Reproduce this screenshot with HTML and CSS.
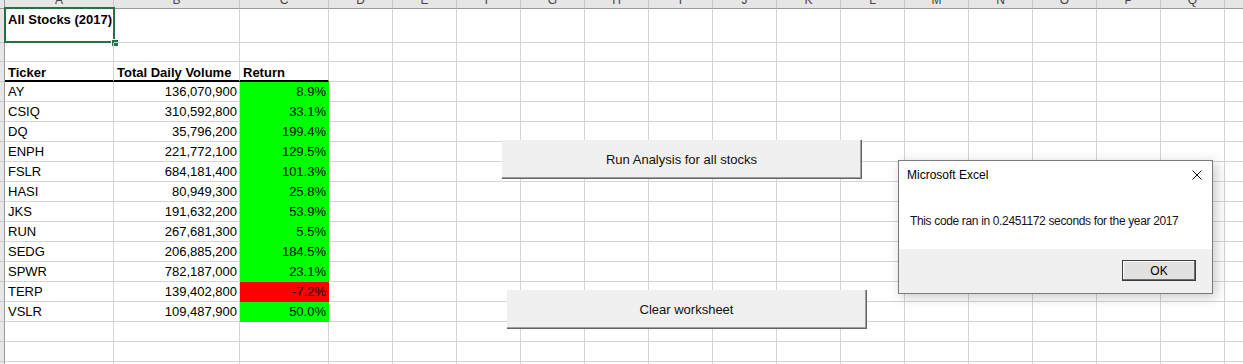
FILE: index.html
```html
<!DOCTYPE html>
<html lang="en">
<head>
  <meta charset="UTF-8">
  <meta name="viewport" content="width=device-width, initial-scale=1.0">
  <title>All Stocks (2017)</title>
  <link rel="stylesheet" href="styles.css">
</head>
<body>
  <div class="planilha" id="planilha"></div>

  <button class="botao-macro botao-rodar">Run Analysis for all stocks</button>
  <button class="botao-macro botao-limpar">Clear worksheet</button>

  <div class="msgbox">
    <div class="msgbox-titulo">
      <span>Microsoft Excel</span>
      <svg class="msgbox-fechar" width="10" height="10" viewBox="0 0 10 10">
        <path d="M0.5 0.5 L9.5 9.5 M9.5 0.5 L0.5 9.5" stroke="#111" stroke-width="1" fill="none"/>
      </svg>
    </div>
    <div class="msgbox-corpo">This code ran in 0.2451172 seconds for the year 2017</div>
    <div class="msgbox-rodape">
      <button class="botao-ok">OK</button>
    </div>
  </div>

  <script>
    const colunas = ['A','B','C','D','E','F','G','H','I','J','K','L','M','N','O','P','Q','R'];
    const totalLinhas = 18;

    const acoes = [
      ['AY', '136,070,900', '8.9%'],
      ['CSIQ', '310,592,800', '33.1%'],
      ['DQ', '35,796,200', '199.4%'],
      ['ENPH', '221,772,100', '129.5%'],
      ['FSLR', '684,181,400', '101.3%'],
      ['HASI', '80,949,300', '25.8%'],
      ['JKS', '191,632,200', '53.9%'],
      ['RUN', '267,681,300', '5.5%'],
      ['SEDG', '206,885,200', '184.5%'],
      ['SPWR', '782,187,000', '23.1%'],
      ['TERP', '139,402,800', '-7.2%'],
      ['VSLR', '109,487,900', '50.0%']
    ];

    const planilha = document.getElementById('planilha');

    function celula(classes, texto) {
      const div = document.createElement('div');
      div.className = classes;
      if (texto !== undefined) {
        const span = document.createElement('span');
        span.textContent = texto;
        div.appendChild(span);
      }
      planilha.appendChild(div);
      return div;
    }

    // cabeçalho das colunas
    celula('canto');
    colunas.forEach(letra => celula('cab-coluna', letra));

    for (let linha = 1; linha <= totalLinhas; linha++) {
      celula('cab-linha');

      colunas.forEach((letra, i) => {
        let classes = 'cel';
        let texto;

        if (linha === 1 && i === 0) {
          const titulo = celula('cel titulo', 'All Stocks (2017)');
          const sel = document.createElement('div');
          sel.className = 'selecao';
          titulo.appendChild(sel);
          return;
        }

        if (linha === 3 && i < 3) {
          classes += ' cabecalho';
          texto = ['Ticker', 'Total Daily Volume', 'Return'][i];
        }

        const dado = acoes[linha - 4];
        if (dado && i < 3) {
          texto = dado[i];
          if (i > 0) classes += ' num';
          if (i === 2) classes += dado[2].startsWith('-') ? ' negativo' : ' positivo';
        }

        celula(classes, texto);
      });
    }
  </script>
</body>
</html>
```

FILE: styles.css
```css
body {
  margin: 0;
  background: #fff;
  font-family: "Liberation Sans", Arial, sans-serif;
  overflow: hidden;
  height: 364px;
}

.planilha {
  display: grid;
  grid-template-columns: 5px 109px 126px 89px repeat(15, 64px);
  grid-template-rows: 9px 34px 19px repeat(16, 20px);
  font-size: 13px;
  color: #000;
}

.canto {
  background: #e6e6e6;
  border-right: 1px solid #9b9b9b;
  border-bottom: 1px solid #9b9b9b;
}

.cab-coluna {
  background: #e6e6e6;
  border-right: 1px solid #c8c8c8;
  border-bottom: 1px solid #9b9b9b;
  display: flex;
  justify-content: center;
  align-items: flex-end;
  overflow: hidden;
  color: #444;
  font-size: 12px;
  line-height: 15px;
}

.cab-linha {
  background: #e6e6e6;
  border-right: 1px solid #9b9b9b;
  border-bottom: 1px solid #c8c8c8;
}

.cel {
  border-right: 1px solid #d4d4d4;
  border-bottom: 1px solid #d4d4d4;
  display: flex;
  align-items: flex-end;
  padding: 0 2px 2px 3px;
  line-height: 15px;
  white-space: nowrap;
  position: relative;
  color: #000;
}

.titulo {
  align-items: flex-start;
  padding-top: 3px;
  font-weight: bold;
}

.selecao {
  position: absolute;
  left: -1px;
  top: -2px;
  width: 111px;
  height: 36px;
  box-sizing: border-box;
  border: 2px solid #217346;
}

.selecao::after {
  content: '';
  position: absolute;
  right: -5px;
  bottom: -5px;
  width: 6px;
  height: 6px;
  background: #217346;
  border-left: 1px solid #fff;
  border-top: 1px solid #fff;
}

.cabecalho {
  font-weight: bold;
  border-bottom: 2px solid #000;
  padding-bottom: 0;
}

.num {
  justify-content: flex-end;
}

.positivo {
  background: #00ff00;
  border-color: #00ff00;
  color: #000;
}

.negativo {
  background: #ff0000;
  border-color: #ff0000;
  color: #000;
}

.botao-macro {
  position: absolute;
  width: 360px;
  height: 39px;
  padding: 0;
  background: #f0f0f0;
  border: none;
  border-right: 1px solid #646464;
  border-bottom: 1px solid #646464;
  box-shadow: inset -1px -1px 0 #a0a0a0;
  font-family: "Liberation Sans", Arial, sans-serif;
  font-size: 13px;
  color: #111;
}

.botao-rodar {
  left: 502px;
  top: 140px;
}

.botao-limpar {
  left: 507px;
  top: 290px;
}

.msgbox {
  position: absolute;
  left: 898px;
  top: 160px;
  width: 315px;
  height: 134px;
  box-sizing: border-box;
  border: 1px solid #7a7a7a;
  background: #fff;
  box-shadow: 3px 3px 12px rgba(0, 0, 0, 0.22);
  display: flex;
  flex-direction: column;
  font-size: 12px;
  line-height: 16px;
  color: #000;
}

.msgbox-titulo {
  height: 28px;
  box-sizing: border-box;
  padding: 6px 10px 0 8px;
  display: flex;
  justify-content: space-between;
}

.msgbox-fechar {
  margin-top: 3px;
}

.msgbox-corpo {
  height: 60px;
  box-sizing: border-box;
  padding: 24px 0 0 11px;
  letter-spacing: -0.35px;
  color: #1a0f24;
}

.msgbox-rodape {
  flex: 1;
  background: #f0f0f0;
  display: flex;
  justify-content: flex-end;
  align-items: flex-start;
  padding: 11px 16px 0 0;
}

.botao-ok {
  width: 74px;
  height: 21px;
  padding: 0;
  background: #e1e1e1;
  border: 1px solid #3c3c3c;
  box-shadow: inset -1px -1px 0 #6e6e6e, inset 1px 1px 0 #fff;
  font-family: "Liberation Sans", Arial, sans-serif;
  font-size: 12px;
  color: #000;
}
```
